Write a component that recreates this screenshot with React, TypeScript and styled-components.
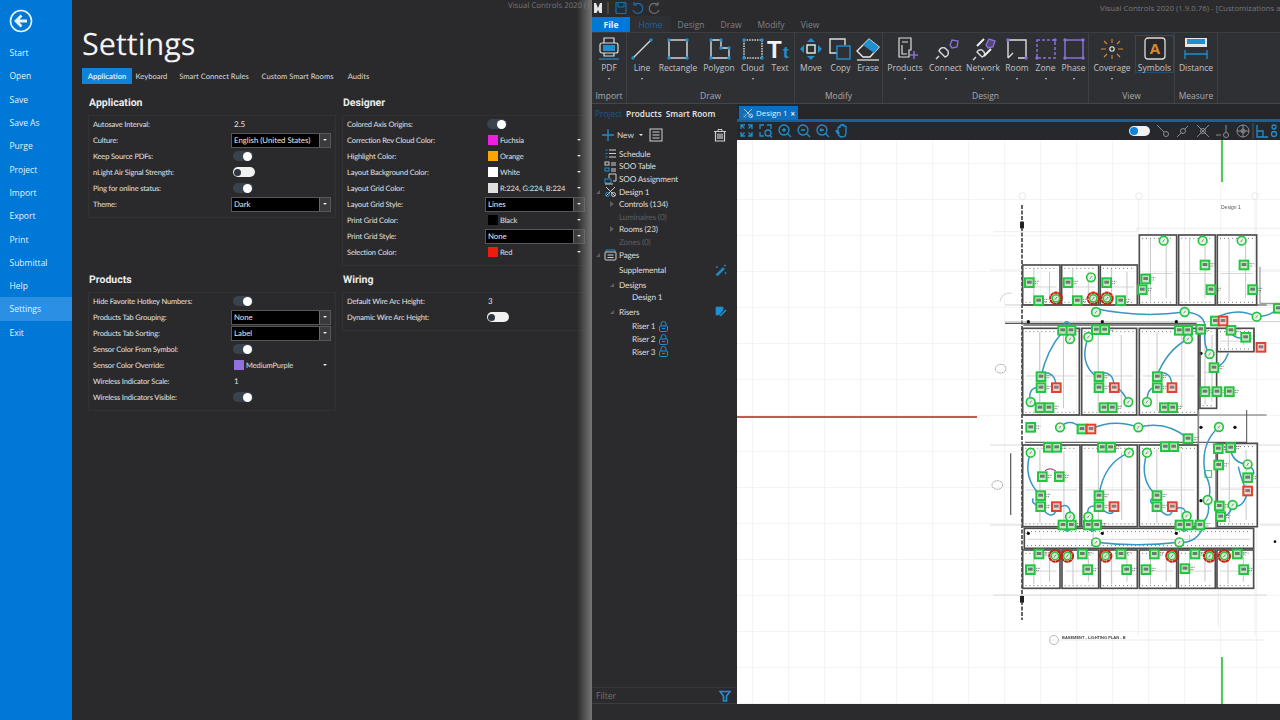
import React from 'react'
import styled, { createGlobalStyle } from 'styled-components'

const GlobalStyle = createGlobalStyle`
  html, body { margin: 0; padding: 0; background: #2a2a2c; }
  body { font-family: "Open Sans", "Noto Sans", sans-serif; }
`

const BLUE = '#1f8fd0'
const PURPLE = '#8a6fd8'
const ORANGE = '#d98a2e'

const Page = styled.div`
  display: flex;
  width: 1280px;
  height: 720px;
  overflow: hidden;
`

/* backstage side menu */
const Sidebar = styled.nav`
  display: flex;
  flex-direction: column;
  width: 72px;
  flex: none;
  background: #0078d7;
`
const BackButton = styled.div`
  display: flex;
  align-items: flex-start;
  padding: 9px 0 0 9px;
  height: 32px;
`
const SideItem = styled.div<{ $active?: boolean }>`
  display: flex;
  align-items: center;
  height: 23.3px;
  padding-left: 9.5px;
  font-size: 8.5px;
  color: #e6f2fb;
  background: ${p => (p.$active ? '#2b8fe3' : 'transparent')};
`

/* settings page */
const SettingsPane = styled.section`
  position: relative;
  display: flex;
  flex-direction: column;
  width: 520px;
  flex: none;
  overflow: hidden;
  background: #2a2a2c;
  font-family: Lato, "Open Sans", sans-serif;
  text-rendering: geometricPrecision;
  &::after {
    content: '';
    position: absolute;
    top: 0;
    bottom: 0;
    right: 0;
    width: 15px;
    background: linear-gradient(to right, rgba(120, 120, 120, 0), #767676);
  }
`
const GhostTitle = styled.div`
  height: 12px;
  margin-left: 436px;
  white-space: nowrap;
  font-family: "Open Sans", sans-serif;
  font-size: 7.8px;
  line-height: 12px;
  color: #77777a;
`
const PageTitle = styled.h1`
  margin: 10px 0 0 10px;
  height: 46px;
  font-family: "Open Sans", sans-serif;
  font-size: 30.6px;
  line-height: 42px;
  font-weight: 400;
  color: #f4f4f4;
`
const TabRow = styled.div`
  display: flex;
  height: 16px;
  margin-left: 10px;
`
const SettingsTab = styled.div<{ $active?: boolean; $w: number }>`
  display: flex;
  align-items: center;
  justify-content: center;
  width: ${p => p.$w}px;
  font-size: 7.6px;
  font-weight: ${p => (p.$active ? 700 : 400)};
  color: ${p => (p.$active ? '#d9ecfa' : '#dcdcdc')};
  background: ${p => (p.$active ? '#0f83dc' : 'transparent')};
  white-space: nowrap;
`
const Columns = styled.div`
  display: grid;
  grid-template-columns: 254px 254px;
  grid-template-rows: 177px auto;
  margin: 11px 0 0 16px;
`
const GroupBlock = styled.div`
  display: flex;
  flex-direction: column;
`
const GroupTitle = styled.h2`
  margin: 0 0 0 1px;
  height: 20px;
  flex: none;
  font-family: Roboto, sans-serif;
  font-size: 10.5px;
  line-height: 16px;
  font-weight: 700;
  color: #ececec;
`
const GroupBox = styled.div`
  width: 248px;
  padding: 0 0 5px 4px;
  box-sizing: border-box;
  border: 1px solid #323234;
`
const SettingRow = styled.div`
  display: grid;
  grid-template-columns: 139px 1fr;
  align-items: center;
  height: 16px;
`
const Label = styled.div`
  font-size: 7.5px;
  letter-spacing: -0.15px;
  color: #e4e4e4;
  white-space: nowrap;
`
const PlainValue = styled.div`
  padding-left: 2px;
  font-size: 8px;
  color: #e0e0e0;
`
const Toggle = styled.div<{ $on?: boolean }>`
  display: flex;
  align-items: center;
  justify-content: ${p => (p.$on ? 'flex-end' : 'flex-start')};
  width: ${p => (p.$on ? 18 : 20)}px;
  height: 10px;
  margin-left: 1px;
  padding: 0 1px;
  box-sizing: content-box;
  border-radius: 6px;
  background: ${p => (p.$on ? '#3a424e' : '#f1f1f1')};
  &::after {
    content: '';
    width: ${p => (p.$on ? 9 : 7)}px;
    height: ${p => (p.$on ? 9 : 7)}px;
    border-radius: 50%;
    background: ${p => (p.$on ? '#fff' : '#2e3440')};
  }
`
const Select = styled.div`
  display: flex;
  align-items: center;
  width: 100px;
  height: 15px;
  margin-left: -1px;
  box-sizing: border-box;
  border: 1px solid #57575a;
  background: #000;
  font-size: 7.8px;
  color: #ececec;
  white-space: nowrap;
`
const SelectText = styled.div`
  flex: 1;
  padding-left: 2px;
`
const SelectCaret = styled.div`
  display: flex;
  align-items: center;
  justify-content: center;
  width: 10px;
  height: 100%;
  background: #3a3a3c;
  border-left: 1px solid #6a6a6a;
  &::after {
    content: '';
    border: 2px solid transparent;
    border-top: 2.5px solid #e8e8e8;
    border-bottom: 0;
  }
`
const ColorValue = styled.div`
  display: flex;
  align-items: center;
  width: 95px;
  margin-left: 2px;
  font-size: 7.5px;
  letter-spacing: -0.1px;
  color: #e0e0e0;
`
const Swatch = styled.div<{ $c: string }>`
  width: 10px;
  height: 10px;
  margin-right: 2px;
  background: ${p => p.$c};
`
const ColorName = styled.div`
  flex: 1;
`
const TinyCaret = styled.div`
  border: 2px solid transparent;
  border-top: 2.5px solid #e8e8e8;
  border-bottom: 0;
  margin-right: 2px;
`

/* application window on the right */
const AppPane = styled.section`
  display: flex;
  flex-direction: column;
  flex: 1;
  min-width: 0;
  overflow: hidden;
  background: #2b2b2e;
`
const TitleBar = styled.div`
  display: flex;
  align-items: center;
  height: 16px;
  flex: none;
`
const QuickIcons = styled.svg`
  width: 80px;
  height: 16px;
  flex: none;
`
const WindowTitle = styled.div`
  margin-left: 428px;
  white-space: nowrap;
  font-size: 7.8px;
  color: #77777a;
`
const MenuRow = styled.div`
  display: flex;
  height: 17px;
  flex: none;
  border-bottom: 1px solid #3d3e43;
  box-sizing: border-box;
`
const MenuTab = styled.div<{ $kind?: 'file' | 'home'; $w: number }>`
  display: flex;
  align-items: center;
  justify-content: center;
  width: ${p => p.$w}px;
  font-size: 8.5px;
  font-weight: ${p => (p.$kind === 'file' ? 700 : 400)};
  color: ${p => (p.$kind === 'file' ? '#eaf5fd' : p.$kind === 'home' ? '#17639e' : '#7f8084')};
  background: ${p => (p.$kind === 'file' ? '#0078d7' : p.$kind === 'home' ? '#2f3034' : 'transparent')};
  margin-top: ${p => (p.$kind === 'file' ? 1 : 0)}px;
`
const Ribbon = styled.div`
  display: flex;
  height: 71px;
  flex: none;
  box-sizing: border-box;
  background: #2f3034;
  border-bottom: 1px solid #45464a;
`
const RibbonGroup = styled.div`
  display: flex;
  flex-direction: column;
  border-right: 1px solid #3f4044;
`
const ToolRow = styled.div`
  display: flex;
  flex: 1;
  padding-top: 2px;
`
const GroupLabel = styled.div`
  height: 14px;
  text-align: center;
  font-size: 8.5px;
  line-height: 14px;
  color: #a9a9ab;
`
const Tool = styled.div<{ $w: number; $selected?: boolean }>`
  position: relative;
  display: flex;
  flex-direction: column;
  align-items: center;
  width: ${p => p.$w}px;
  height: 38px;
  box-sizing: border-box;
  border: 1px solid ${p => (p.$selected ? '#1c4f78' : 'transparent')};
`
const ToolIcon = styled.svg`
  width: 30px;
  height: 26px;
  flex: none;
`
const ToolLabel = styled.div`
  font-size: 8.5px;
  line-height: 11px;
  margin-top: 0;
  color: #c4c4c6;
  white-space: nowrap;
`
const ToolCaret = styled.div`
  margin-top: 5px;
  width: 0;
  border: 1.5px solid transparent;
  border-top: 2px solid #c8c8c8;
  border-bottom: 0;
`
const Workspace = styled.div`
  display: flex;
  flex: 1;
  min-height: 0;
`
const LeftPanel = styled.div`
  display: flex;
  flex-direction: column;
  width: 145px;
  flex: none;
  background: #2b2b2e;
`
const PanelTabs = styled.div`
  display: flex;
  align-items: center;
  gap: 4px;
  height: 18px;
  padding-left: 3px;
`
const PanelTab = styled.div<{ $active?: boolean }>`
  font-size: 8.3px;
  font-weight: ${p => (p.$active ? 400 : 600)};
  color: ${p => (p.$active ? '#17598e' : '#e8e8e8')};
  white-space: nowrap;
`
const NewRow = styled.div`
  display: flex;
  align-items: center;
  height: 25px;
  padding-left: 9px;
`
const NewText = styled.div`
  margin-left: 2px;
  font-family: Lato, sans-serif;
  font-size: 8.2px;
  text-rendering: geometricPrecision;
  color: #dcdcdc;
`
const NewCaret = styled(TinyCaret)`
  margin: 0 6px 0 5px;
`
const NewIcon = styled.svg`
  width: 14px;
  height: 14px;
  flex: none;
`
const TrashIcon = styled(NewIcon)`
  margin-left: auto;
  margin-right: 10px;
`
const Tree = styled.div`
  flex: 1;
  padding-top: 0.5px;
`
const TreeRow = styled.div<{ $h: number; $pad: number; $dim?: boolean }>`
  display: flex;
  align-items: center;
  height: ${p => p.$h}px;
  padding-left: ${p => p.$pad}px;
  font-family: Lato, sans-serif;
  font-size: 8.2px;
  letter-spacing: -0.16px;
  text-rendering: geometricPrecision;
  color: ${p => (p.$dim ? '#5c5c5e' : '#dedede')};
  white-space: nowrap;
`
const Expander = styled.span<{ $open?: boolean }>`
  width: 0;
  margin-right: 5px;
  margin-left: -9px;
  border-style: solid;
  border-color: transparent;
  ${p =>
    p.$open
      ? 'border-width: 0 0 4px 4px; border-bottom-color: #5e5e60;'
      : 'border-width: 3px 0 3px 4px; border-left-color: #5e5e60;'}
`
const TreeIcon = styled.svg`
  width: 13px;
  height: 13px;
  margin-right: 2px;
  margin-left: -1px;
  flex: none;
`
const RowAction = styled.svg`
  width: 13px;
  height: 13px;
  margin-left: auto;
  margin-right: 10px;
`
const LockIcon = styled.svg`
  width: 11px;
  height: 11px;
  margin-left: 3px;
`
const FilterRow = styled.div`
  display: flex;
  align-items: center;
  justify-content: space-between;
  height: 17px;
  padding: 0 6px 0 4px;
  box-sizing: border-box;
  border-top: 1px solid #37373a;
  border-bottom: 1px solid #3d3d40;
  font-size: 8.5px;
  color: #6e6e70;
`
const CanvasColumn = styled.div`
  display: flex;
  flex-direction: column;
  flex: 1;
  min-width: 0;
`
const DocTabs = styled.div`
  display: flex;
  align-items: flex-end;
  height: 18px;
  flex: none;
  padding-left: 2px;
  box-sizing: border-box;
  border-bottom: 3px solid #1a5f96;
  background: #26272b;
`
const DocTab = styled.div`
  display: flex;
  align-items: center;
  gap: 2px;
  height: 14px;
  padding: 0 3px;
  margin-bottom: -1px;
  background: #0d6fbd;
  font-size: 7.9px;
  color: #e4f1fb;
`
const DocIcon = styled.svg`
  width: 12px;
  height: 12px;
`
const DocClose = styled.span`
  margin-left: 1px;
  font-size: 8px;
  font-weight: 700;
`
const CanvasBar = styled.div`
  display: flex;
  align-items: center;
  justify-content: space-between;
  height: 18px;
  flex: none;
  padding-left: 2px;
  background: #27282c;
`
const CanvasTools = styled.svg`
  width: 120px;
  height: 18px;
  flex: none;
`
const BarRight = styled.div`
  display: flex;
  align-items: center;
`
const SnapToggle = styled.div`
  display: flex;
  align-items: center;
  width: 21px;
  height: 10px;
  margin-right: 5px;
  padding-left: 1px;
  box-sizing: border-box;
  border-radius: 6px;
  background: #f1f1f1;
  &::before {
    content: '';
    width: 8px;
    height: 8px;
    border-radius: 50%;
    background: #0f83dc;
  }
`
const SnapIcons = styled.svg`
  width: 125px;
  height: 18px;
  flex: none;
`
const Canvas = styled.div`
  flex: 1;
  min-height: 0;
  background-color: #fff;
  background-image:
    linear-gradient(to right, #f4f4f4 1px, transparent 1px),
    linear-gradient(to bottom, #f4f4f4 1px, transparent 1px);
  background-size: 36px 36px;
  background-position: 15px 23px;
`
const PlanSvg = styled.svg`
  display: block;
  width: 100%;
  height: 100%;
`
const StatusBar = styled.div`
  height: 16px;
  flex: none;
  background: #2b2b2e;
`

type Row = { label: string; toggle?: boolean; value?: string; select?: string; color?: string; name?: string }

const applicationRows: Row[] = [
  { label: 'Autosave Interval:', value: '2.5' },
  { label: 'Culture:', select: 'English (United States)' },
  { label: 'Keep Source PDFs:', toggle: true },
  { label: 'nLight Air Signal Strength:', toggle: false },
  { label: 'Ping for online status:', toggle: true },
  { label: 'Theme:', select: 'Dark' },
]
const productRows: Row[] = [
  { label: 'Hide Favorite Hotkey Numbers:', toggle: true },
  { label: 'Products Tab Grouping:', select: 'None' },
  { label: 'Products Tab Sorting:', select: 'Label' },
  { label: 'Sensor Color From Symbol:', toggle: true },
  { label: 'Sensor Color Override:', color: '#9370db', name: 'MediumPurple' },
  { label: 'Wireless Indicator Scale:', value: '1' },
  { label: 'Wireless Indicators Visible:', toggle: true },
]
const designerRows: Row[] = [
  { label: 'Colored Axis Origins:', toggle: true },
  { label: 'Correction Rev Cloud Color:', color: '#f01fe0', name: 'Fuchsia' },
  { label: 'Highlight Color:', color: '#ffa500', name: 'Orange' },
  { label: 'Layout Background Color:', color: '#ffffff', name: 'White' },
  { label: 'Layout Grid Color:', color: '#e0e0e0', name: 'R:224, G:224, B:224' },
  { label: 'Layout Grid Style:', select: 'Lines' },
  { label: 'Print Grid Color:', color: '#000000', name: 'Black' },
  { label: 'Print Grid Style:', select: 'None' },
  { label: 'Selection Color:', color: '#ee1c0c', name: 'Red' },
]
const wiringRows: Row[] = [
  { label: 'Default Wire Arc Height:', value: '3' },
  { label: 'Dynamic Wire Arc Height:', toggle: false },
]

const SettingsGroup = ({ title, rows }: { title: string; rows: Row[] }) => (
  <GroupBlock>
    <GroupTitle>{title}</GroupTitle>
    <GroupBox>
      {rows.map(row => (
        <SettingRow key={row.label}>
          <Label>{row.label}</Label>
          {row.value && <PlainValue>{row.value}</PlainValue>}
          {row.toggle !== undefined && <Toggle $on={row.toggle} />}
          {row.select && (
            <Select>
              <SelectText>{row.select}</SelectText>
              <SelectCaret />
            </Select>
          )}
          {row.color && (
            <ColorValue>
              <Swatch $c={row.color} />
              <ColorName>{row.name}</ColorName>
              <TinyCaret />
            </ColorValue>
          )}
        </SettingRow>
      ))}
    </GroupBox>
  </GroupBlock>
)

const dot = (x: number, y: number, c = BLUE, r = 1.7) => <circle cx={x} cy={y} r={r} fill={c} />

const ribbonIcons: Record<string, React.ReactNode> = {
  PDF: (
    <g fill="none" strokeWidth="1.2">
      <path d="M10 7V2h10v5" stroke="#ddd" />
      <rect x="6" y="7" width="18" height="10" rx="2" stroke="#ddd" />
      <rect x="9" y="9" width="12" height="6" fill={BLUE} />
      <path d="M10 17v3h10v-3" stroke="#ddd" />
      <path d="M5 23h20" stroke={BLUE} />
    </g>
  ),
  Line: (
    <g>
      <path d="M6 22 24 4" stroke="#ddd" strokeWidth="1.2" />
      {dot(6, 22)}
      {dot(24, 4)}
    </g>
  ),
  Rectangle: (
    <g>
      <rect x="6" y="4" width="18" height="18" fill="none" stroke="#ddd" strokeWidth="1.4" />
      {dot(6, 4)}
      {dot(24, 22)}
      {dot(6, 22)}
      {dot(24, 4)}
    </g>
  ),
  Polygon: (
    <g>
      <path d="M7 4h10v8h8v10H7z" fill="none" stroke="#ddd" strokeWidth="1.4" />
      {dot(7, 4)}
      {dot(17, 4)}
      {dot(17, 12)}
      {dot(25, 12)}
      {dot(25, 22)}
      {dot(7, 22)}
    </g>
  ),
  Cloud: (
    <g>
      <rect x="6" y="4" width="18" height="18" fill="none" stroke="#ccc" strokeWidth="1.6" strokeDasharray="1.6 1" />
      {dot(6, 4)}
      {dot(24, 22)}
      {dot(6, 22)}
      {dot(24, 4)}
    </g>
  ),
  Text: (
    <g fontFamily="Liberation Sans, sans-serif" fontWeight="700">
      <text x="2" y="22" fontSize="24" fill="#f2f2f2">T</text>
      <text x="18" y="22" fontSize="17" fill={BLUE}>t</text>
    </g>
  ),
  Move: (
    <g>
      <rect x="11" y="9" width="8" height="8" fill="#2f3034" stroke="#eee" strokeWidth="1.4" />
      <path d="M15 2l4 4h-8zM15 24l4-4h-8zM4 13l4-4v8zM26 13l-4-4v8z" fill={BLUE} />
    </g>
  ),
  Copy: (
    <g fill="none" strokeWidth="1.4">
      <path d="M17 17H4V3h15v6" stroke="#ddd" />
      <rect x="11" y="10" width="13" height="13" stroke={BLUE} fill="#2f3034" />
    </g>
  ),
  Erase: (
    <g>
      <path d="M4 15 16 3l10 8-9 10H10z" fill="none" stroke="#eee" strokeWidth="1.3" />
      <path d="M10 9 16 3l10 8-5 6z" fill={BLUE} />
      <path d="M4 24h22" stroke="#eee" strokeWidth="1.2" />
    </g>
  ),
  Products: (
    <g fill="none" strokeWidth="1.2">
      <path d="M9 2h12v12h-2v7H9z" stroke="#ddd" />
      <path d="M12 6h6M12 9v9h5" stroke="#ddd" />
      <path d="M24 15v8M20 19h8" stroke={PURPLE} strokeWidth="1.5" />
    </g>
  ),
  Connect: (
    <g fill="none" strokeWidth="1.4">
      <path d="M5 23l3-3M8 15l6 6c3-1 4-3 3-6l-3-3c-3-1-5 0-6 3z" stroke="#ddd" />
      <path d="M19 9l2-5 6 1-1 6-5 1z" stroke={PURPLE} />
    </g>
  ),
  Network: (
    <g fill="none" strokeWidth="1.4">
      <path d="M5 24l3-3M9 16l5 5c3-1 3-3 2-5l-2-2c-3-1-4 0-5 2z" stroke="#ddd" />
      <path d="M18 9l3-6 6 2-2 6-5 1z" stroke={PURPLE} fill={PURPLE} fillOpacity=".4" />
      <path d="M9 10l7-7M16 20l7-7" stroke="#eee" strokeWidth="2" />
    </g>
  ),
  Room: (
    <g fill="none">
      <path d="M6 22V4h18v18h-8M6 22l5-5" stroke="#ddd" strokeWidth="1.4" />
      {dot(6, 4, PURPLE)}
      {dot(24, 22, PURPLE)}
    </g>
  ),
  Zone: (
    <g>
      <rect x="6" y="4" width="18" height="18" fill="none" stroke={PURPLE} strokeWidth="1.5" strokeDasharray="3 2" />
      {dot(6, 22, PURPLE)}
      {dot(24, 4, PURPLE)}
    </g>
  ),
  Phase: (
    <g>
      <rect x="6" y="4" width="18" height="18" fill="none" stroke={PURPLE} strokeWidth="1.5" />
      {dot(6, 4, PURPLE)}
      {dot(24, 4, PURPLE)}
      {dot(6, 22, PURPLE)}
      {dot(24, 22, PURPLE)}
    </g>
  ),
  Coverage: (
    <g stroke={ORANGE} strokeWidth="1.1">
      <path d="M15 3v4M15 19v4M4 13h5M21 13h5M7 5l3 3M23 5l-3 3M7 21l3-3M23 21l-3-3" />
      <circle cx="15" cy="13" r="2.2" fill="none" stroke="#eee" />
    </g>
  ),
  Symbols: (
    <g>
      <rect x="5" y="2" width="20" height="21" rx="3" fill="#26272b" stroke="#ddd" strokeWidth="1.3" />
      <text x="15" y="18" textAnchor="middle" fontSize="15" fontWeight="700" fontFamily="Open Sans, sans-serif" fill={ORANGE}>A</text>
    </g>
  ),
  Distance: (
    <g>
      <rect x="4" y="2" width="22" height="9" fill="#e8e8e8" />
      <rect x="6" y="3" width="18" height="5" fill={BLUE} />
      <path d="M4 14v9M26 14v9M4 18h22" stroke={BLUE} strokeWidth="1.3" fill="none" />
    </g>
  ),
}

type ToolSpec = { name: string; w: number; caret?: boolean; selected?: boolean }
const ribbonGroups: { label: string; tools: ToolSpec[] }[] = [
  { label: 'Import', tools: [{ name: 'PDF', w: 34, caret: true }] },
  {
    label: 'Draw',
    tools: [
      { name: 'Line', w: 30, caret: true },
      { name: 'Rectangle', w: 42 },
      { name: 'Polygon', w: 40 },
      { name: 'Cloud', w: 27, caret: true },
      { name: 'Text', w: 28 },
    ],
  },
  {
    label: 'Modify',
    tools: [
      { name: 'Move', w: 32 },
      { name: 'Copy', w: 27 },
      { name: 'Erase', w: 28 },
    ],
  },
  {
    label: 'Design',
    tools: [
      { name: 'Products', w: 44, caret: true },
      { name: 'Connect', w: 37, caret: true },
      { name: 'Network', w: 38, caret: true },
      { name: 'Room', w: 30, caret: true },
      { name: 'Zone', w: 27, caret: true },
      { name: 'Phase', w: 29, caret: true },
    ],
  },
  {
    label: 'View',
    tools: [
      { name: 'Coverage', w: 46, caret: true },
      { name: 'Symbols', w: 39, selected: true },
    ],
  },
  { label: 'Measure', tools: [{ name: 'Distance', w: 42 }] },
]

const listGlyph = (
  <g stroke="#cfcfcf" strokeWidth="1" fill="none">
    <path d="M5 3h7M5 6.500h7M5 10h7" />
    <path d="M1.500 3h2M1.500 6.500h2M1.500 10h2" stroke={BLUE} />
  </g>
)
const tableGlyph = (
  <g stroke="#cfcfcf" strokeWidth="1" fill="none">
    <rect x="1" y="2" width="4" height="3" />
    <rect x="1" y="8" width="4" height="3" stroke={BLUE} />
    <path d="M7 3h5M7 9h5M7 5h5M7 11h5" />
  </g>
)
const assignGlyph = (
  <g fill="none" strokeWidth="1">
    <path d="M5 6V2h7v7H9" stroke="#cfcfcf" />
    <rect x="1" y="7" width="6" height="4" stroke={BLUE} />
    <path d="M1 12h8" stroke="#cfcfcf" />
  </g>
)
const designGlyph = (
  <g fill="none" strokeWidth="1">
    <path d="M2 2l9 9M11 2 2 11" stroke="#cfcfcf" />
    <circle cx="3.500" cy="9.500" r="2" stroke={BLUE} />
    <circle cx="9.500" cy="9.500" r="2" stroke="#cfcfcf" />
  </g>
)
const pagesGlyph = (
  <g fill="none" strokeWidth="1">
    <path d="M2 4V2h9v2" stroke={BLUE} />
    <rect x="1" y="4" width="11" height="8" rx="1" stroke="#cfcfcf" />
    <path d="M3.500 7h6M3.500 9.500h6" stroke="#cfcfcf" />
  </g>
)
const wandGlyph = (
  <g fill={BLUE} stroke={BLUE}>
    <path d="M2 11.500 9 4.500l1.500 1.500-7 7z" strokeWidth=".5" />
    <path d="M11 1.500v2M10 2.500h2M3 3v2M2 4h2M11.500 9v2M10.500 10h2" strokeWidth=".8" />
  </g>
)
const riserGlyph = (
  <g fill={BLUE} stroke={BLUE}>
    <path d="M2 2h7v3l-4 5H2z" strokeWidth=".6" />
    <path d="M6 11l6-6" strokeWidth="1.6" />
  </g>
)

type TreeSpec = {
  label: string
  h: number
  pad: number
  icon?: React.ReactNode
  expander?: 'open' | 'closed'
  dim?: boolean
  action?: React.ReactNode
  lock?: boolean
}
const treeRows: TreeSpec[] = [
  { label: 'Schedule', h: 12.6, pad: 13, icon: listGlyph },
  { label: 'SOO Table', h: 12.6, pad: 13, icon: tableGlyph },
  { label: 'SOO Assignment', h: 12.6, pad: 13, icon: assignGlyph },
  { label: 'Design 1', h: 12.6, pad: 13, icon: designGlyph, expander: 'open' },
  { label: 'Controls (134)', h: 12.6, pad: 27, expander: 'closed' },
  { label: 'Luminaires (0)', h: 12.6, pad: 27, dim: true },
  { label: 'Rooms (23)', h: 12.6, pad: 27, expander: 'closed' },
  { label: 'Zones (0)', h: 12.6, pad: 27, dim: true },
  { label: 'Pages', h: 12.6, pad: 13, icon: pagesGlyph, expander: 'open' },
  { label: 'Supplemental', h: 17.6, pad: 27, action: wandGlyph },
  { label: 'Designs', h: 12.6, pad: 27, expander: 'open' },
  { label: 'Design 1', h: 12.6, pad: 40 },
  { label: 'Risers', h: 16.500, pad: 27, expander: 'open', action: riserGlyph },
  { label: 'Riser 1', h: 12.600, pad: 40, lock: true },
  { label: 'Riser 2', h: 12.600, pad: 40, lock: true },
  { label: 'Riser 3', h: 12.600, pad: 40, lock: true },
]

const greenSquares7 = [
  [148, 278], [176, 332], [264, 278], [292, 332], [380, 278], [422, 332], [497, 267], [487, 299], [675, 225], [693, 299],
  [792, 225], [818, 299], [895, 355], [706, 393], [662, 418], [248, 421], [273, 421], [349, 419], [374, 419], [598, 421],
  [623, 421], [753, 421], [797, 442], [702, 533], [183, 560], [183, 593], [357, 560], [357, 593], [532, 560], [532, 593],
  [675, 605], [711, 605], [748, 605], [180, 653], [207, 653], [372, 653], [397, 653], [553, 653], [578, 653],
]
const greenCircles7 = [
  [551, 152], [668, 152], [785, 152], [333, 262], [348, 366], [614, 366], [830, 380], [270, 447], [325, 441], [624, 447],
  [689, 492], [152, 636], [445, 636], [501, 636],
]
const redRings7 = [[228, 325], [340, 325], [381, 325]]
const redSquares7 = [[729, 393], [843, 472], [229, 593], [403, 593], [576, 593]]
const walls7 = [
  [478, 135, 112, 210], [596, 135, 110, 210], [712, 135, 118, 210], [128, 225, 112, 120], [245, 225, 111, 120],
  [361, 225, 111, 120], [128, 415, 170, 260], [305, 415, 165, 260], [478, 415, 177, 260], [660, 415, 50, 240],
  [712, 415, 110, 70],
]
const wires7 = [
  'M340 355Q480 385 614 366Q680 370 675 420Q670 470 689 492',
  'M248 425Q200 480 183 560', 'M325 441Q295 520 350 560', 'M624 447Q560 480 530 560',
  'M183 550Q225 540 229 590', 'M357 550Q400 540 403 590', 'M532 550Q575 540 576 590',
  'M152 636Q140 590 183 593', 'M445 636Q420 590 403 593', 'M501 636Q500 590 532 593',
  'M706 385Q770 350 830 380Q870 380 895 355', 'M248 410Q260 380 273 410', 'M753 430Q770 450 797 442',
  'M702 533Q730 530 745 490',
]

const greenSquares8 = [
  [152, 52], [306, 57], [624, 86], [205, 112], [230, 112], [367, 112], [392, 112], [556, 110], [581, 110], [715, 116],
  [752, 113], [716, 165], [803, 203], [187, 200], [238, 200], [182, 257], [182, 290], [357, 257], [357, 290], [531, 290],
  [531, 257], [718, 288], [722, 320], [249, 345], [274, 345], [325, 345], [350, 345], [600, 345], [625, 345], [660, 345],
  [177, 432], [307, 432], [423, 432], [523, 432], [645, 432], [772, 432], [151, 479], [323, 479], [440, 479], [498, 479],
  [615, 476], [791, 479],
]
const greenCircles8 = [
  [240, 52], [475, 52], [717, 51], [152, 128], [447, 128], [501, 128], [803, 163], [683, 270], [758, 285], [270, 320],
  [325, 320], [620, 318], [348, 397], [598, 397],
]
const redRings8 = [[225, 438], [262, 438], [377, 438], [576, 438], [689, 438], [733, 438]]
const redSquares8 = [[333, 57], [803, 243], [229, 290], [402, 290], [577, 290]]
const walls8 = [
  [128, 105, 172, 245], [305, 105, 167, 245], [478, 105, 175, 245], [712, 100, 120, 250], [133, 355, 688, 60],
  [128, 420, 112, 115], [246, 420, 110, 115], [361, 420, 111, 115], [478, 420, 112, 115], [595, 420, 111, 115],
  [711, 420, 110, 115],
]
const wires8 = [
  'M240 52Q270 20 306 57', 'M333 57Q400 25 475 52Q560 30 624 86', 'M717 51Q660 100 675 190Q700 240 683 270Q695 320 660 345',
  'M152 128Q125 200 182 257', 'M447 128Q370 160 357 257', 'M501 128Q475 210 531 257', 'M348 397Q470 412 598 397Q650 400 670 350',
  'M182 290Q215 335 229 300Q270 265 272 320', 'M357 290Q395 325 402 300', 'M531 290Q570 335 577 300Q615 280 620 318',
  'M325 320Q315 280 357 290', 'M160 265Q150 280 182 290', 'M515 265Q505 280 531 290', 'M752 120Q760 160 803 163Q840 190 803 203',
  'M775 170Q790 230 803 243Q790 300 758 285', 'M718 288Q700 320 722 320Q750 320 758 285', 'M205 105Q215 135 230 105',
  'M367 105Q380 135 392 105', 'M556 105Q570 135 581 105', 'M249 355Q262 372 274 355', 'M325 355Q337 372 350 355', 'M600 355Q612 372 625 355',
]

const GreenBox = ({ x, y }: { x: number; y: number }) => (
  <g>
    <rect x={x - 13} y={y - 13} width="26" height="26" fill="#c8e4c8" stroke="#24c540" strokeWidth="6" />
    <rect x={x - 7} y={y - 6} width="14" height="9" fill="#6d7a6d" />
    <path d={`M${x + 17} ${y - 4}h12M${x + 17} ${y + 3}h9`} stroke="#555" strokeWidth="2.500" strokeDasharray="3 2" />
  </g>
)
const GreenDisc = ({ x, y }: { x: number; y: number }) => (
  <g>
    <circle cx={x} cy={y} r="13" fill="#e6f2e6" stroke="#24c540" strokeWidth="5" />
    <path d={`M${x - 3} ${y + 4}l6-8`} stroke="#6a7a6a" strokeWidth="2.500" />
  </g>
)
const RedRing = ({ x, y }: { x: number; y: number }) => (
  <g>
    <circle cx={x} cy={y} r="17" fill="none" stroke="#c8200c" strokeWidth="6.500" strokeDasharray="11 1" />
    <circle cx={x} cy={y} r="11" fill="#d8ead6" stroke="#24c540" strokeWidth="4.500" />
    <path d={`M${x - 3} ${y + 4}l6-8`} stroke="#5a6a5a" strokeWidth="2.500" />
  </g>
)
const RedBox = ({ x, y }: { x: number; y: number }) => (
  <g>
    <rect x={x - 13} y={y - 13} width="26" height="26" fill="#eed6d2" stroke="#df4330" strokeWidth="6" />
    <rect x={x - 7} y={y - 6} width="14" height="9" fill="#8d7a78" />
  </g>
)

type PlanLayer = {
  squares: number[][]
  circles: number[][]
  rings: number[][]
  reds: number[][]
  walls: number[][]
  wires: string[]
}

const PlanPart = ({ top, layer, children }: { top: number; layer: PlanLayer; children?: React.ReactNode }) => (
  <g transform={`translate(980 ${top}) scale(0.3333)`}>
    {children}
    {layer.walls.map(([x, y, w, h]) => (
      <g key={`${x}-${y}`}>
        <rect x={x} y={y} width={w} height={h} fill="none" stroke="#4e4e4e" strokeWidth="5" />
        <path d={`M${x + w * 0.3} ${y + 12}V${y + h - 12}M${x + w * 0.72} ${y + 20}V${y + h - 20}`} stroke="#bcbcbc" strokeWidth="2.500" />
        <path d={`M${x + 10} ${y + h * 0.55}H${x + w - 10}`} stroke="#cccccc" strokeWidth="2.500" />
        <path d={`M${x + 8} ${y + 10}H${x + w - 8}M${x + 8} ${y + h - 8}H${x + w - 8}`} stroke="#333" strokeWidth="2" strokeDasharray="3 9" />
      </g>
    ))}
    {layer.wires.map(d => (
      <path key={d} d={d} fill="none" stroke="#3796c2" strokeWidth="4.500" />
    ))}
    {layer.squares.map(([x, y]) => <GreenBox key={`${x}-${y}`} x={x} y={y} />)}
    {layer.circles.map(([x, y]) => <GreenDisc key={`${x}-${y}`} x={x} y={y} />)}
    {layer.rings.map(([x, y]) => <RedRing key={`${x}-${y}`} x={x} y={y} />)}
    {layer.reds.map(([x, y]) => <RedBox key={`${x}-${y}`} x={x} y={y} />)}
  </g>
)

const FloorPlan = () => (
  <PlanSvg viewBox="737 140 543 564" preserveAspectRatio="xMinYMin slice">
    <defs>
      <filter id="soft" x="-2%" y="-2%" width="104%" height="104%">
        <feGaussianBlur stdDeviation="0.3" />
      </filter>
    </defs>
    <path d="M737 417H977" stroke="#b0201a" strokeWidth="1.500" />
    <path d="M1222 140V182M1222 657V704" stroke="#4ccb5a" strokeWidth="2" />
    <g filter="url(#soft)">
      <path d="M1022 205V620" stroke="#333" strokeWidth="1.500" strokeDasharray="4 1.500" />
      <text x="1221" y="209" fontSize="5" fill="#555" fontFamily="Liberation Sans, sans-serif">Design 1</text>
      <text x="1062" y="639" fontSize="4" fontWeight="700" fill="#444" fontFamily="Liberation Sans, sans-serif">BASEMENT - LIGHTING PLAN - B</text>
      <circle cx="1054" cy="640" r="4.500" fill="#fff" stroke="#888" strokeWidth=".6" />
      <path d="M1050 640H1265" stroke="#ddd" strokeWidth=".6" />
      <PlanPart
        top={190}
        layer={{ squares: greenSquares7, circles: greenCircles7, rings: redRings7, reds: redSquares7, walls: walls7, wires: wires7 }}
      >
        <g fill="none" stroke="#ddd" strokeWidth="2">
          <circle cx="127" cy="18" r="10" />
          <circle cx="477" cy="18" r="10" />
          <circle cx="825" cy="18" r="10" />
        </g>
        <path d="M40 125H470V115H900M825 30V230M30 240H128M840 240H900M475 30V130" fill="none" stroke="#e4e4e4" strokeWidth="2" />
        <path d="M75 345H900M75 395H900" fill="none" stroke="#b8b8b8" strokeWidth="2" />
        <path d="M130 345H860M75 400H650" stroke="#555" strokeWidth="3.500" />
        <path d="M130 405H650" stroke="#888" strokeWidth="6" />
        <path d="M840 230V340H900" stroke="#888" strokeWidth="3" fill="none" />
        <path d="M822 415V480" stroke="#888" strokeWidth="3" />
        <circle cx="145" cy="395" r="5" fill="#111" />
        <circle cx="367" cy="395" r="5" fill="#111" />
        <circle cx="589" cy="395" r="5" fill="#111" />
        <circle cx="663" cy="490" r="5" fill="#111" />
        <path d="M60 335A28 28 0 0 1 95 310" fill="none" stroke="#bbb" strokeWidth="2" />
        <ellipse cx="62" cy="536" rx="16" ry="13" fill="none" stroke="#555" strokeWidth="2" strokeDasharray="3 2" />
        <rect x="120" y="95" width="12" height="20" fill="#222" />
        <path d="M135 675H860" stroke="#666" strokeWidth="3.500" />
      </PlanPart>
      <PlanPart
        top={410}
        layer={{ squares: greenSquares8, circles: greenCircles8, rings: redRings8, reds: redSquares8, walls: walls8, wires: wires8 }}
      >
        <path d="M30 105H900M30 345H128M840 345H900M40 555H860" fill="none" stroke="#c8c8c8" strokeWidth="2" />
        <path d="M475 540V680M825 540V680M715 540V650" fill="none" stroke="#e4e4e4" strokeWidth="2" />
        <path d="M135 97H800V0" fill="none" stroke="#666" strokeWidth="3.500" />
        <path d="M655 0V350M708 100V355" fill="none" stroke="#888" strokeWidth="5" />
        <path d="M92 130V315" stroke="#666" strokeWidth="4" />
        <rect x="675" y="182" width="20" height="20" fill="#fff" stroke="#35c24c" strokeWidth="3" />
        <path d="M195 182Q212 170 228 184" fill="none" stroke="#8a1a7a" strokeWidth="3" />
        <circle cx="145" cy="370" r="5" fill="#111" />
        <circle cx="367" cy="370" r="5" fill="#111" />
        <circle cx="589" cy="370" r="5" fill="#111" />
        <circle cx="663" cy="52" r="5" fill="#111" />
        <circle cx="765" cy="52" r="5" fill="#111" />
        <circle cx="663" cy="272" r="5" fill="#111" />
        <circle cx="885" cy="395" r="4" fill="#111" />
        <ellipse cx="52" cy="225" rx="16" ry="13" fill="none" stroke="#555" strokeWidth="2" strokeDasharray="3 2" />
        <rect x="120" y="558" width="12" height="20" fill="#222" />
      </PlanPart>
    </g>
  </PlanSvg>
)

export default function App() {
  return (
    <Page>
      <GlobalStyle />
      <Sidebar>
        <BackButton>
          <svg width="24" height="24" viewBox="0 0 24 24" fill="none">
            <circle cx="12" cy="12" r="10.500" stroke="#e8f4fd" strokeWidth="1.600" />
            <path d="M18 12H8M12.500 6.500 7 12l5.500 5.500" stroke="#e8f4fd" strokeWidth="2.800" />
          </svg>
        </BackButton>
        {['Start', 'Open', 'Save', 'Save As', 'Purge', 'Project', 'Import', 'Export', 'Print', 'Submittal', 'Help', 'Settings', 'Exit'].map(item => (
          <SideItem key={item} $active={item === 'Settings'}>{item}</SideItem>
        ))}
      </Sidebar>

      <SettingsPane>
        <GhostTitle>Visual Controls 2020 (1.9.0.76) - [Customizations</GhostTitle>
        <PageTitle>Settings</PageTitle>
        <TabRow>
          <SettingsTab $active $w={50}>Application</SettingsTab>
          <SettingsTab $w={39}>Keyboard</SettingsTab>
          <SettingsTab $w={86}>Smart Connect Rules</SettingsTab>
          <SettingsTab $w={81}>Custom Smart Rooms</SettingsTab>
          <SettingsTab $w={41}>Audits</SettingsTab>
        </TabRow>
        <Columns>
          <SettingsGroup title="Application" rows={applicationRows} />
          <SettingsGroup title="Designer" rows={designerRows} />
          <SettingsGroup title="Products" rows={productRows} />
          <SettingsGroup title="Wiring" rows={wiringRows} />
        </Columns>
      </SettingsPane>

      <AppPane>
        <TitleBar>
          <QuickIcons viewBox="0 0 80 16">
            <path d="M2 3h2l2 5 2-5h2v10H7.500L6 10l-1.500 3H2z" fill="#e4e4e4" />
            <path d="M16 2v12" stroke="#666" />
            <rect x="24" y="2.500" width="10" height="11" rx="1" fill="none" stroke="#1c6fae" strokeWidth="1.200" />
            <path d="M26 3v4h6V3" stroke="#1c6fae" fill="none" />
            <path d="M42 5a5 5 0 1 1-1 5M42 2v3h3" fill="none" stroke="#1c6fae" strokeWidth="1.200" />
            <path d="M66 5a5 5 0 1 0 1 5M66 2v3h-3" fill="none" stroke="#6f7074" strokeWidth="1.200" />
          </QuickIcons>
          <WindowTitle>Visual Controls 2020 (1.9.0.76) - [Customizations and</WindowTitle>
        </TitleBar>
        <MenuRow>
          <MenuTab $kind="file" $w={38}>File</MenuTab>
          <MenuTab $kind="home" $w={41}>Home</MenuTab>
          <MenuTab $w={40}>Design</MenuTab>
          <MenuTab $w={40}>Draw</MenuTab>
          <MenuTab $w={40}>Modify</MenuTab>
          <MenuTab $w={38}>View</MenuTab>
        </MenuRow>
        <Ribbon>
          {ribbonGroups.map(group => (
            <RibbonGroup key={group.label}>
              <ToolRow>
                {group.tools.map(tool => (
                  <Tool key={tool.name} $w={tool.w} $selected={tool.selected}>
                    <ToolIcon viewBox="0 0 30 26">{ribbonIcons[tool.name]}</ToolIcon>
                    <ToolLabel>{tool.name}</ToolLabel>
                    {tool.caret && <ToolCaret />}
                  </Tool>
                ))}
              </ToolRow>
              <GroupLabel>{group.label}</GroupLabel>
            </RibbonGroup>
          ))}
        </Ribbon>
        <Workspace>
          <LeftPanel>
            <PanelTabs>
              <PanelTab $active>Project</PanelTab>
              <PanelTab>Products</PanelTab>
              <PanelTab>Smart Room</PanelTab>
            </PanelTabs>
            <NewRow>
              <NewIcon viewBox="0 0 14 14">
                <path d="M7 1v12M1 7h12" stroke={BLUE} strokeWidth="1.300" />
              </NewIcon>
              <NewText>New</NewText>
              <NewCaret />
              <NewIcon viewBox="0 0 14 14">
                <rect x="1" y="1" width="12" height="12" fill="none" stroke="#cfcfcf" />
                <path d="M3.500 4h7M3.500 7h7M3.500 10h7" stroke="#cfcfcf" />
              </NewIcon>
              <TrashIcon viewBox="0 0 14 14">
                <path d="M1 3.500h12M5 3.500V1.500h4v2" stroke="#cfcfcf" fill="none" />
                <path d="M2.500 3.500v9.500h9V3.500M5 5.500v5.500M7 5.500v5.500M9 5.500v5.500" stroke="#cfcfcf" fill="none" strokeWidth="1.200" />
              </TrashIcon>
            </NewRow>
            <Tree>
              {treeRows.map((row, i) => (
                <TreeRow key={i} $h={row.h} $pad={row.pad} $dim={row.dim}>
                  {row.expander && <Expander $open={row.expander === 'open'} />}
                  {row.icon && <TreeIcon viewBox="0 0 13 13">{row.icon}</TreeIcon>}
                  {row.label}
                  {row.lock && (
                    <LockIcon viewBox="0 0 11 11">
                      <path d="M3 5V3a2.500 2.500 0 0 1 5 0v2" fill="none" stroke={BLUE} />
                      <rect x="1.500" y="5" width="8" height="5.500" rx="1" fill="none" stroke={BLUE} />
                      <path d="M4 7.500h3" stroke={BLUE} />
                    </LockIcon>
                  )}
                  {row.action && <RowAction viewBox="0 0 13 13">{row.action}</RowAction>}
                </TreeRow>
              ))}
            </Tree>
            <FilterRow>
              Filter
              <svg width="12" height="12" viewBox="0 0 12 12">
                <path d="M1 1.500h10L7.500 6v5h-3V6z" fill="none" stroke={BLUE} strokeWidth="1.600" />
              </svg>
            </FilterRow>
          </LeftPanel>
          <CanvasColumn>
            <DocTabs>
              <DocTab>
                <DocIcon viewBox="0 0 13 13">{designGlyph}</DocIcon>
                Design 1
                <DocClose>×</DocClose>
              </DocTab>
            </DocTabs>
            <CanvasBar>
              <CanvasTools viewBox="0 0 120 18">
                <g fill="none" stroke={BLUE} strokeWidth="1.300">
                  <path d="M2 7V3h4M9 3h4v4M2 10v4h4M13 10v4H9M2.500 3.500l3 3M12.500 3.500l-3 3M2.500 13.500l3-3M12.500 13.500l-3-3" />
                  <path d="M21 7V3h4M28 3h4v4M21 10v4h4" />
                  <circle cx="29" cy="11" r="3" />
                  <path d="M31 13.500l2 2" />
                  <circle cx="45" cy="8" r="5" />
                  <path d="M48.500 11.500l3.500 3.500M43 8h4M45 6v4" />
                  <circle cx="64" cy="8" r="5" />
                  <path d="M67.500 11.500l3.500 3.500M62 8h4" />
                  <circle cx="83" cy="8" r="5" />
                  <path d="M86.500 11.500l3.500 3.500M81 8h4M81 8l1.500-1.500M81 8l1.500 1.500" />
                  <path d="M99 11V6a1 1 0 0 1 2 0V4a1 1 0 0 1 2 0v-.500a1 1 0 0 1 2 0V5a1 1 0 0 1 2 0v6c0 3-2 4-4 4s-3-1-4-3l-2-3c1-1 2 0 3 2z" />
                </g>
              </CanvasTools>
              <BarRight>
                <SnapToggle />
                <SnapIcons viewBox="0 0 125 18">
                  <g fill="none" stroke="#8c8d91" strokeWidth="1">
                    <path d="M2 3l7 7" />
                    <circle cx="11" cy="12" r="2.500" />
                    <path d="M22 15l4-4M30 7l3-3" />
                    <circle cx="28" cy="9" r="2.500" />
                    <path d="M42 3l12 12M54 3 42 15" />
                    <circle cx="48" cy="9" r="2.500" />
                    <path d="M61 13h5M71 3v7" />
                    <circle cx="71" cy="13" r="2.500" />
                    <circle cx="88" cy="9" r="6" />
                    <circle cx="88" cy="9" r="2" />
                    <path d="M88 3v12M82 9h12" />
                    <path d="M98 1v16" stroke="#555" />
                  </g>
                  <g fill="none" stroke={BLUE} strokeWidth="1.300">
                    <path d="M102 3v12h11M102 9h6v6" />
                    <circle cx="119" cy="5" r="2" />
                    <circle cx="119" cy="12" r="2.500" />
                  </g>
                </SnapIcons>
              </BarRight>
            </CanvasBar>
            <Canvas>
              <FloorPlan />
            </Canvas>
          </CanvasColumn>
        </Workspace>
        <StatusBar />
      </AppPane>
    </Page>
  )
}
